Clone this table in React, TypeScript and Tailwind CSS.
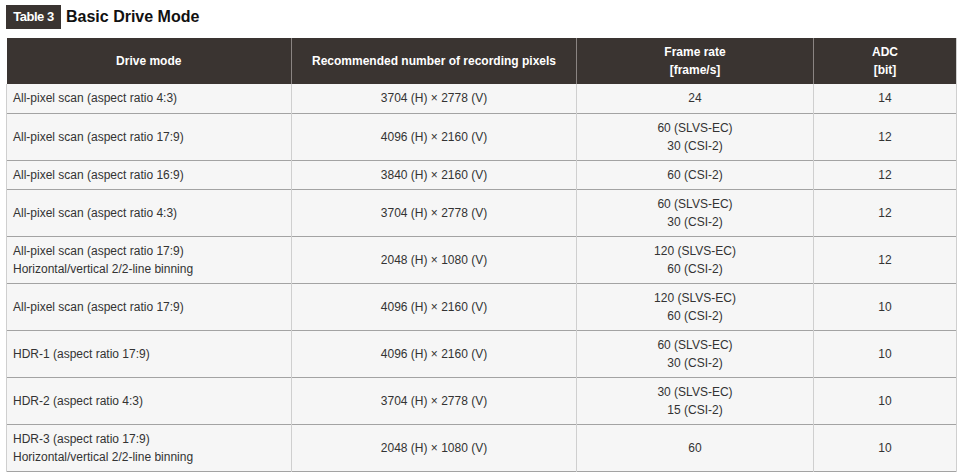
const rows: [string[], string, string[], string][] = [
  [['All-pixel scan (aspect ratio 4:3)'], '3704 (H) × 2778 (V)', ['24'], '14'],
  [['All-pixel scan (aspect ratio 17:9)'], '4096 (H) × 2160 (V)', ['60 (SLVS-EC)', '30 (CSI-2)'], '12'],
  [['All-pixel scan (aspect ratio 16:9)'], '3840 (H) × 2160 (V)', ['60 (CSI-2)'], '12'],
  [['All-pixel scan (aspect ratio 4:3)'], '3704 (H) × 2778 (V)', ['60 (SLVS-EC)', '30 (CSI-2)'], '12'],
  [
    ['All-pixel scan (aspect ratio 17:9)', 'Horizontal/vertical 2/2-line binning'],
    '2048 (H) × 1080 (V)',
    ['120 (SLVS-EC)', '60 (CSI-2)'],
    '12',
  ],
  [['All-pixel scan (aspect ratio 17:9)'], '4096 (H) × 2160 (V)', ['120 (SLVS-EC)', '60 (CSI-2)'], '10'],
  [['HDR-1 (aspect ratio 17:9)'], '4096 (H) × 2160 (V)', ['60 (SLVS-EC)', '30 (CSI-2)'], '10'],
  [['HDR-2 (aspect ratio 4:3)'], '3704 (H) × 2778 (V)', ['30 (SLVS-EC)', '15 (CSI-2)'], '10'],
  [
    ['HDR-3 (aspect ratio 17:9)', 'Horizontal/vertical 2/2-line binning'],
    '2048 (H) × 1080 (V)',
    ['60'],
    '10',
  ],
]

function Lines({ items }: { items: string[] }) {
  return (
    <>
      {items.map((t) => (
        <div key={t}>{t}</div>
      ))}
    </>
  )
}

export default function App() {
  return (
    <div className="min-h-[476px] w-[962px] bg-white pl-[6px] pt-[5px] font-['Liberation_Sans',Arial,sans-serif] text-[#333]">
      <div className="flex items-center gap-[5px]">
        <span className="flex h-[24px] w-[55px] items-center justify-center bg-[#3a3431] text-[13px] font-bold tracking-[-0.5px] text-white">
          Table 3
        </span>
        <span className="text-[16px] font-bold text-[#111]">Basic Drive Mode</span>
      </div>

      <table className="mt-[9px] w-[950px] table-fixed border-collapse text-[12px] leading-[18px]">
        <colgroup>
          <col className="w-[285px]" />
          <col className="w-[285px]" />
          <col className="w-[237px]" />
          <col className="w-[143px]" />
        </colgroup>
        <thead>
          <tr className="h-[46px] bg-[#3a3431] font-bold text-white">
            <th className="border-r border-[#8a8482] font-bold">Drive mode</th>
            <th className="border-r border-[#8a8482] font-bold">Recommended number of recording pixels</th>
            <th className="border-r border-[#8a8482] font-bold">
              Frame rate
              <br />
              [frame/s]
            </th>
            <th className="border-r border-[#cfcfcf] font-bold">
              ADC
              <br />
              [bit]
            </th>
          </tr>
        </thead>
        <tbody>
          {rows.map(([mode, pixels, rate, adc], i) => {
            const tall = mode.length > 1 || rate.length > 1
            return (
              <tr
                key={i}
                className={`${tall ? 'h-[47px]' : 'h-[29px]'} border-b border-[#a3a3a3] bg-[#f6f6f6]`}
              >
                <td className="border-x border-[#cfcfcf] px-[6px] align-middle">
                  <Lines items={mode} />
                </td>
                <td className="border-x border-[#cfcfcf] text-center">{pixels}</td>
                <td className="border-x border-[#cfcfcf] text-center">
                  <Lines items={rate} />
                </td>
                <td className="border-x border-[#cfcfcf] text-center">{adc}</td>
              </tr>
            )
          })}
        </tbody>
      </table>
    </div>
  )
}
